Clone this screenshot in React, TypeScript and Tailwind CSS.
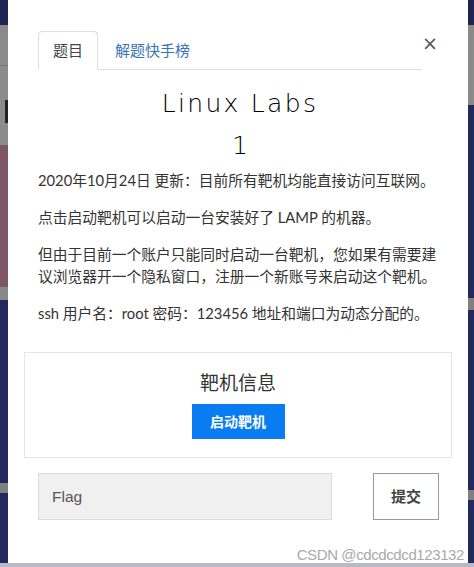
import React from 'react';

const cjk = { fontFamily: 'Lato, "Noto Sans CJK SC", sans-serif' };

// Page behind the modal, dimmed by the backdrop
function LeftEdge() {
  return (
    <div className="flex w-[8px] shrink-0 flex-col">
      <div className="h-[25px] bg-[#1d2453]" />
      <div className="h-[41px] border-b border-[#777] bg-[#8a8a8a]" />
      <div className="flex h-[79px] flex-col bg-[#8b8b8b] pt-[34px]">
        <div className="ml-[5px] h-[23px] w-[3px] bg-[#222]" />
      </div>
      <div className="h-[142px] bg-[#7c5664]" />
      <div className="h-[13px] bg-[#868985]" />
      <div className="h-[183px] bg-[#222a5d]" />
      <div className="h-[10px] bg-[#808082]" />
      <div className="flex-1 bg-[#222a5d]" />
    </div>
  );
}

function RightEdge() {
  return (
    <div className="flex w-[6px] shrink-0 flex-col">
      <div className="h-[25px] bg-[#1d2453]" />
      <div className="h-[80px] bg-[#8a8a8a]" />
      <div className="h-[193px] bg-[#222a5d]" />
      <div className="h-[12px] bg-[#7f8181]" />
      <div className="h-[180px] bg-[#222a5d]" />
      <div className="h-[10px] bg-[#808082]" />
      <div className="flex-1 bg-[#222a5d]" />
    </div>
  );
}

export default function App() {
  return (
    <div className="relative flex h-[567px] w-[474px] flex-col overflow-hidden bg-[#222a5d]">
      <div className="flex h-[563px]">
        <LeftEdge />
        <div className="flex w-[460px] shrink-0 flex-col bg-white text-[#333]" style={cjk}>
          {/* header: tabs + close */}
          <div className="flex items-start pl-[30px]">
            <div className="mt-[31px] flex w-[388px] border-b border-[#ddd]">
              <div className="-mb-px flex h-[39px] items-center rounded-t-[4px] border border-b-white border-[#ddd] bg-white px-[14px] text-[15px] text-[#444]">
                题目
              </div>
              <div className="ml-[2px] flex h-[38px] items-center px-[15px] text-[15px] text-[#3a73b5]">
                解题快手榜
              </div>
            </div>
            <div
              className="ml-auto mr-[30px] mt-[31px] text-[19px] leading-[24px] text-[#555]"
              style={{ fontFamily: '"DejaVu Sans", sans-serif' }}
            >
              ×
            </div>
          </div>

          {/* body */}
          <div className="flex flex-col pl-[30px]">
            <div
              className="mt-[17px] w-[404px] text-center text-[25px] font-extralight leading-[34px] tracking-[2.3px] text-black"
              style={{ fontFamily: '"DejaVu Sans", sans-serif' }}
            >
              Linux Labs
            </div>
            <div
              className="mt-[8px] w-[404px] text-center text-[25px] font-extralight leading-[34px] text-black"
              style={{ fontFamily: '"DejaVu Sans", sans-serif' }}
            >
              1
            </div>
            <div className="mt-[6px] flex w-[406px] flex-col gap-[15px] text-[14.75px] leading-[22px]">
              <p>2020年10月24日 更新：目前所有靶机均能直接访问互联网。</p>
              <p>点击启动靶机可以启动一台安装好了 LAMP 的机器。</p>
              <p>但由于目前一个账户只能同时启动一台靶机，您如果有需要建议浏览器开一个隐私窗口，注册一个新账号来启动这个靶机。</p>
              <p>ssh 用户名：root 密码：123456 地址和端口为动态分配的。</p>
            </div>
          </div>

          {/* target machine card */}
          <div className="ml-[16px] mt-[28px] flex h-[106px] w-[428px] flex-col items-center border border-[#e6e6e6] pt-[17px]">
            <div className="text-[19px] leading-[26px] text-[#333]">靶机信息</div>
            <button className="mt-[8px] flex h-[35px] w-[93px] items-center justify-center bg-[#0a7cf2] text-[14px] font-bold text-white">
              启动靶机
            </button>
          </div>

          {/* flag submit */}
          <div className="ml-[30px] mt-[15px] flex w-[401px] items-center justify-between">
            <div
              className="flex h-[47px] w-[294px] items-center border border-[#dcdcdc] bg-[#f0f0f0] pl-[13px] text-[15.5px] text-[#555]"
              style={{ fontFamily: '"Liberation Sans", sans-serif' }}
            >
              Flag
            </div>
            <button className="flex h-[47px] w-[66px] items-center justify-center border border-[#999] bg-white text-[15px] font-bold text-[#444]">
              提交
            </button>
          </div>
        </div>
        <RightEdge />
      </div>
      <div className="h-[4px] bg-[#b7bac4]" />

      {/* watermark over the screenshot */}
      <div
        className="absolute right-[10px] top-[545px] text-[15px] leading-[20px] tracking-[-0.4px] text-[#aaa]"
        style={{ fontFamily: '"Liberation Sans", sans-serif' }}
      >
        CSDN @cdcdcdcd123132
      </div>
    </div>
  );
}
